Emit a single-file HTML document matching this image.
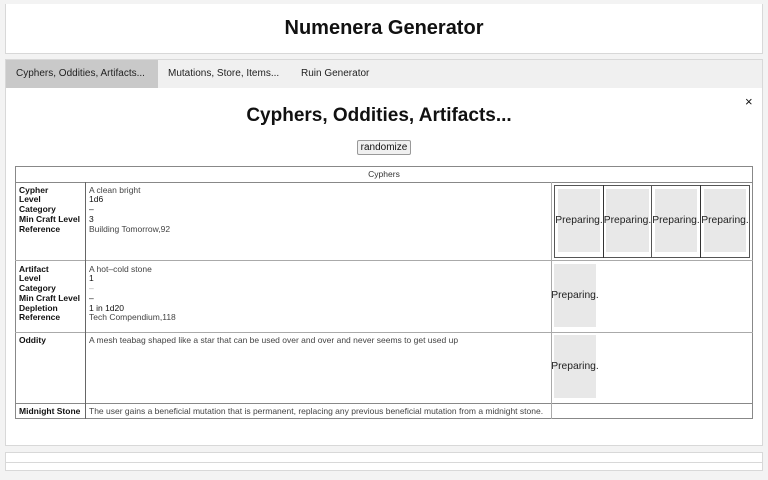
<!DOCTYPE html>
<html><head><meta charset="utf-8"><style>
*{margin:0;padding:0;box-sizing:border-box}
body{width:768px;height:480px;background:#f3f3f3;font-family:"Liberation Sans",sans-serif;position:relative;overflow:hidden;color:#111}
.a{position:absolute}
.panel{background:#fff;border:1px solid #d8d8d8}
.t{font-size:8.5px;line-height:9.8px;white-space:nowrap}
.b{font-weight:bold}
.g{color:#444}
.box{position:absolute;background:#e8e8e8;font-size:10.3px;color:#222;display:flex;align-items:center;justify-content:center;white-space:nowrap}
.hl{position:absolute;height:1px;background:#888}
.vl{position:absolute;width:1px;background:#888}
</style></head><body>
<div class="a panel" style="left:5px;top:4px;width:758px;height:50px;border-top:none"></div>
<div class="a b" style="left:0;width:768px;top:17px;text-align:center;font-size:20px">Numenera Generator</div>
<div class="a" style="left:5px;top:59px;width:758px;height:30px;background:#f0f0f0;border:1px solid #d8d8d8"></div>
<div class="a" style="left:6px;top:60px;width:152px;height:28px;background:#c9c9c9"></div>
<div class="a" style="left:16px;top:68px;font-size:10px;color:#222;line-height:12px">Cyphers, Oddities, Artifacts...</div>
<div class="a" style="left:168px;top:68px;font-size:10px;color:#222;line-height:12px">Mutations, Store, Items...</div>
<div class="a" style="left:301px;top:68px;font-size:10px;color:#222;line-height:12px">Ruin Generator</div>
<div class="a panel" style="left:5px;top:88px;width:758px;height:358px;border-top:none"></div>
<div class="a" style="left:745px;top:94px;font-size:13px">×</div>
<div class="a b" style="left:0;width:758px;top:105px;text-align:center;font-size:19px">Cyphers, Oddities, Artifacts...</div>
<div class="a" style="left:357px;top:140px;width:54px;height:15px;border:1px solid #999;border-radius:2px;background:#f0f0f0;font-size:10px;text-align:center;line-height:13px">randomize</div>

<div class="a" style="left:15px;top:166px;width:738px;height:253px;border:1px solid #888"></div>
<div class="a" style="left:15px;top:169px;width:738px;text-align:center;font-size:8.5px;color:#333">Cyphers</div>
<div class="hl" style="left:15px;top:182px;width:738px"></div>
<div class="hl" style="left:15px;top:260px;width:738px;background:#aaa"></div>
<div class="hl" style="left:15px;top:332px;width:738px;background:#aaa"></div>
<div class="hl" style="left:15px;top:403px;width:738px"></div>
<div class="vl" style="left:85px;top:182px;height:237px;background:#666"></div>
<div class="vl" style="left:551px;top:182px;height:237px;background:#aaa"></div>

<div class="a t b" style="left:19px;top:185.5px">Cypher<br>Level<br>Category<br>Min Craft Level<br>Reference</div>
<div class="a t" style="left:89px;top:185.5px"><span class="g">A clean bright</span><br>1d6<br>–<br>3<br><span class="g">Building Tomorrow,92</span></div>
<div class="a t b" style="left:19px;top:264.5px">Artifact<br>Level<br>Category<br>Min Craft Level<br>Depletion<br>Reference</div>
<div class="a t" style="left:89px;top:264.5px"><span class="g">A hot–cold stone</span><br>1<br><span style="color:#aaa">–</span><br>–<br>1 in 1d20<br><span class="g">Tech Compendium,118</span></div>
<div class="a t b" style="left:19px;top:336px">Oddity</div>
<div class="a t g" style="left:89px;top:336px">A mesh teabag shaped like a star that can be used over and over and never seems to get used up</div>
<div class="a t b" style="left:19px;top:407px">Midnight Stone</div>
<div class="a t g" style="left:89px;top:407px">The user gains a beneficial mutation that is permanent, replacing any previous beneficial mutation from a midnight stone.</div>

<div class="a" style="left:554px;top:185px;width:196px;height:73px;border:1px solid #555"></div>
<div class="vl" style="left:603px;top:185px;height:73px;background:#333"></div>
<div class="vl" style="left:651px;top:185px;height:73px;background:#555"></div>
<div class="vl" style="left:700px;top:185px;height:73px;background:#333"></div>
<div class="box" style="left:558px;top:189px;width:42px;height:63px">Preparing.</div>
<div class="box" style="left:606px;top:189px;width:43px;height:63px">Preparing.</div>
<div class="box" style="left:655px;top:189px;width:42px;height:63px">Preparing.</div>
<div class="box" style="left:704px;top:189px;width:42px;height:63px">Preparing.</div>
<div class="box" style="left:554px;top:264px;width:42px;height:63px">Preparing.</div>
<div class="box" style="left:554px;top:335px;width:42px;height:63px">Preparing.</div>

<div class="a panel" style="left:5px;top:452px;width:758px;height:10px;border-bottom:none"></div>
<div class="a panel" style="left:5px;top:462px;width:758px;height:9px"></div>
</body></html>
